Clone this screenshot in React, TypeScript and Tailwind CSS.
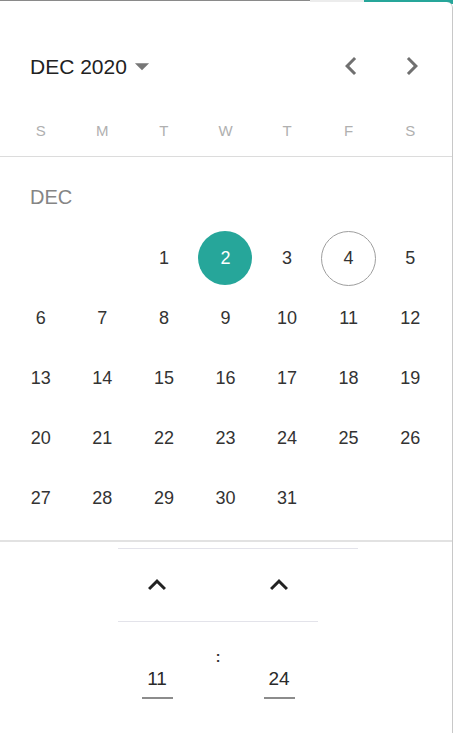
import React from "react";

const days: (number | null)[] = [null, null, 1, 2, 3, 4, 5];
for (let d = 6; d <= 31; d++) days.push(d);

function Chevron({ dir, className }: { dir: "left" | "right" | "up"; className?: string }) {
  const d =
    dir === "left"
      ? "M15.41 7.41L14 6l-6 6 6 6 1.41-1.41L10.83 12z"
      : dir === "right"
      ? "M8.59 16.59L10 18l6-6-6-6-1.41 1.41L13.17 12z"
      : "M7.41 15.41L12 10.83l4.59 4.58L18 14l-6-6-6 6z";
  return (
    <svg viewBox="0 0 24 24" className={className} fill="currentColor">
      <path d={d} />
    </svg>
  );
}

export default function App() {
  return (
    <div className="w-[453px] h-[733px] bg-white overflow-hidden" style={{ fontFamily: '"Liberation Sans", Arial, sans-serif' }}>
      <div className="flex h-[4px]">
        <div className="w-[310px] border-t border-[#8a8a8a] bg-white" />
        <div className="w-[54px] bg-[#ececec]" />
        <div className="flex-1 bg-[#26a69a]" />
      </div>
      <div className="relative -mt-[2px] h-[731px] bg-white rounded-tr-[6px] border-r border-[#c8c8c8]">
        {/* Header */}
        <div className="pt-[32px]">
          <div className="h-[64px] flex items-center pl-[30px]">
            <span className="text-[21px] text-[#222] leading-none">DEC 2020</span>
            <svg viewBox="0 0 24 24" className="w-[34px] h-[34px] ml-[-2px] text-[#777]" fill="currentColor">
              <path d="M7 10l5 5 5-5z" />
            </svg>
            <div className="flex-1" />
            <Chevron dir="left" className="w-[36px] h-[36px] text-[#707070] mr-[25px]" />
            <Chevron dir="right" className="w-[36px] h-[36px] text-[#707070] mr-[22px]" />
          </div>
          <div className="mt-[11px] h-[44px] px-[10px]">
            <div className="w-[431px] h-full grid grid-cols-7 items-center text-center text-[15px] text-[#b0b0b0]">
              {["S", "M", "T", "W", "T", "F", "S"].map((l, i) => (
                <span key={i}>{l}</span>
              ))}
            </div>
          </div>
          <div className="h-[3px]" />
        </div>
        <div className="border-t border-[#dcdcdc]" />
        {/* Month */}
        <div className="pt-[28px] pb-[12px] border-b-2 border-[#e2e2e2]">
          <div className="pl-[30px] h-[24px] flex items-center text-[20px] text-[#858585]">DEC</div>
          <div className="mt-[19px] px-[10px]">
            <div className="w-[431px] grid grid-cols-7 auto-rows-[60px] text-[18px] text-[#333]">
              {days.map((d, i) => (
                <div key={i} className="flex items-center justify-center">
                  {d === 2 ? (
                    <div className="w-[54px] h-[54px] rounded-full bg-[#26a69a] text-white flex items-center justify-center">2</div>
                  ) : d === 4 ? (
                    <div className="w-[55px] h-[55px] rounded-full border border-[#9e9e9e] flex items-center justify-center">4</div>
                  ) : (
                    d
                  )}
                </div>
              ))}
            </div>
          </div>
        </div>
        {/* Time */}
        <div className="pl-[118px] pt-[6px]">
          <div className="w-[240px] border-t border-[#e3e3ea]" />
          <div className="w-[200px] h-[73px] flex items-center border-b border-[#e3e3ea]">
            <div className="w-[78px] flex justify-center">
              <Chevron dir="up" className="w-[36px] h-[36px] text-[#222]" />
            </div>
            <div className="w-[44px]" />
            <div className="w-[78px] flex justify-center">
              <Chevron dir="up" className="w-[36px] h-[36px] text-[#222]" />
            </div>
          </div>
          <div className="w-[200px] flex items-start">
            <div className="w-[78px] flex flex-col items-center pt-[45px]">
              <span className="h-[24px] leading-[24px] text-[19px] text-[#2a2a2a]">11</span>
              <div className="mt-[6px] w-[31px] h-[2px] bg-[#8c8c8c]" />
            </div>
            <div className="w-[44px] flex justify-center pt-[25px]">
              <span className="h-[20px] leading-[20px] text-[14px] font-bold text-[#333]">:</span>
            </div>
            <div className="w-[78px] flex flex-col items-center pt-[45px]">
              <span className="h-[24px] leading-[24px] text-[19px] text-[#2a2a2a]">24</span>
              <div className="mt-[6px] w-[31px] h-[2px] bg-[#8c8c8c]" />
            </div>
          </div>
        </div>
      </div>
    </div>
  );
}
